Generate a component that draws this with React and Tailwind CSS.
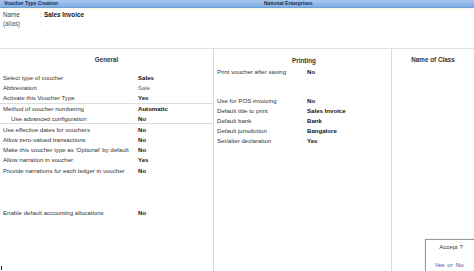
import React from 'react'

const general = [
  { label: 'Select type of voucher', value: 'Sales' },
  { label: 'Abbreviation', value: 'Sale', plain: true },
  { label: 'Activate this Voucher Type', value: 'Yes', line: true },
  { label: 'Method of voucher numbering', value: 'Automatic' },
  { label: 'Use advanced configuration', value: 'No', indent: true, line: true },
  { label: 'Use effective dates for vouchers', value: 'No' },
  { label: 'Allow zero-valued transactions', value: 'No' },
  { label: "Make this voucher type as 'Optional' by default", value: 'No' },
  { label: 'Allow narration in voucher', value: 'Yes' },
  { label: 'Provide narrations for each ledger in voucher', value: 'No' },
]

const printing = [
  { label: 'Use for POS invoicing', value: 'No' },
  { label: 'Default title to print', value: 'Sales Invoice' },
  { label: 'Default bank', value: 'Bank' },
  { label: 'Default jurisdiction', value: 'Bangalore' },
  { label: 'Set/alter declaration', value: 'Yes' },
]

function Row({ label, value, plain, indent, line, labelW, h, pad }) {
  return (
    <div className={`flex items-center ${h} ${pad} ${line ? 'border-b border-[#dcdcdc]' : ''}`}>
      <span className={`${labelW} shrink-0 whitespace-nowrap text-[#333] ${indent ? 'pl-[8px]' : ''}`}>{label}</span>
      <span className="w-[5px] shrink-0 text-[#b0b0b0]">:</span>
      <span className={plain ? 'text-[#666]' : 'font-bold text-[#111]'}>{value}</span>
    </div>
  )
}

export default function App() {
  return (
    <div className="relative w-[474px] h-[271px] overflow-hidden bg-white text-[6.1px] leading-none" style={{ fontFamily: '"Liberation Sans", Arial, sans-serif' }}>

      {/* Title bar */}
      <div className="flex items-center h-[8px] bg-gradient-to-b from-[#a6c8ef] to-[#7eaee4] border-b border-[#6f9fd8] text-[5px] font-bold text-[#1b2b4d]">
        <span className="pl-[4px] w-[264px]">Voucher Type Creation</span>
        <span>National Enterprises</span>
      </div>
      <div className="h-[2px] bg-[#fdfbef]" />

      {/* Name / alias */}
      <div className="h-[39px] border-b border-[#e2e2e2] pl-[3px] pt-[1px]">
        <div className="flex items-center h-[9px] text-[6.3px]">
          <span className="w-[37px] text-[#444]">Name</span>
          <span className="w-[4px] text-[#888]">:</span>
          <span className="font-bold text-[#111]">Sales Invoice</span>
        </div>
        <div className="flex items-center h-[9px] text-[6.3px]">
          <span className="w-[37px] text-[#555]">(alias)</span>
          <span className="w-[4px] text-[#aaa]">:</span>
        </div>
      </div>

      {/* Body */}
      <div className="flex h-[222px]">
        {/* General */}
        <div className="w-[214px] shrink-0 border-r border-[#dadada] pt-[6px]">
          <div className="h-[10px] flex items-center justify-center font-bold text-[6.3px] text-[#333]">General</div>
          <div className="mt-[8px]">
            {general.map((r, i) => (
              <Row key={i} {...r} labelW="w-[130px]" h="h-[10.3px]" pad="pl-[3px]" />
            ))}
            <div className="mt-[32px]">
              <Row label="Enable default accounting allocations" value="No" labelW="w-[130px]" h="h-[10.3px]" pad="pl-[3px]" />
            </div>
          </div>
        </div>

        {/* Printing */}
        <div className="w-[178px] shrink-0 border-r border-[#dadada] pt-[7px] pl-[3px]">
          <div className="h-[10px] flex items-center justify-center font-bold text-[6.3px] text-[#333]">Printing</div>
          <div className="mt-[1px]">
            <Row label="Print voucher after saving" value="No" labelW="w-[85px]" h="h-[10px]" />
          </div>
          <div className="mt-[19px]">
            {printing.map((r, i) => (
              <Row key={i} {...r} labelW="w-[85px]" h="h-[10px]" />
            ))}
          </div>
        </div>

        {/* Name of Class */}
        <div className="flex-1 pt-[6px]">
          <div className="h-[10px] flex items-center justify-center font-bold text-[6.3px] text-[#333]">Name of Class</div>
        </div>
      </div>

      {/* cursor tick */}
      <div className="absolute left-[1px] top-[266px] w-[1px] h-[4px] bg-[#222]" />

      {/* Accept box */}
      <div className="absolute left-[425px] top-[239px] w-[52px] h-[35px] bg-white border border-[#9a9a9a] shadow-[0_0_2px_rgba(0,0,0,0.15)] flex flex-col items-center">
        <div className="mt-[3px] h-[8px] flex items-center text-[#333]">Accept ?</div>
        <div className="mt-[10px] h-[8px] flex items-center gap-[3px] pr-[4px]">
          <span className="text-[#2a55a8]">Yes</span>
          <span className="text-[#666]">or</span>
          <span className="text-[#2a55a8]">No</span>
        </div>
      </div>
    </div>
  )
}
